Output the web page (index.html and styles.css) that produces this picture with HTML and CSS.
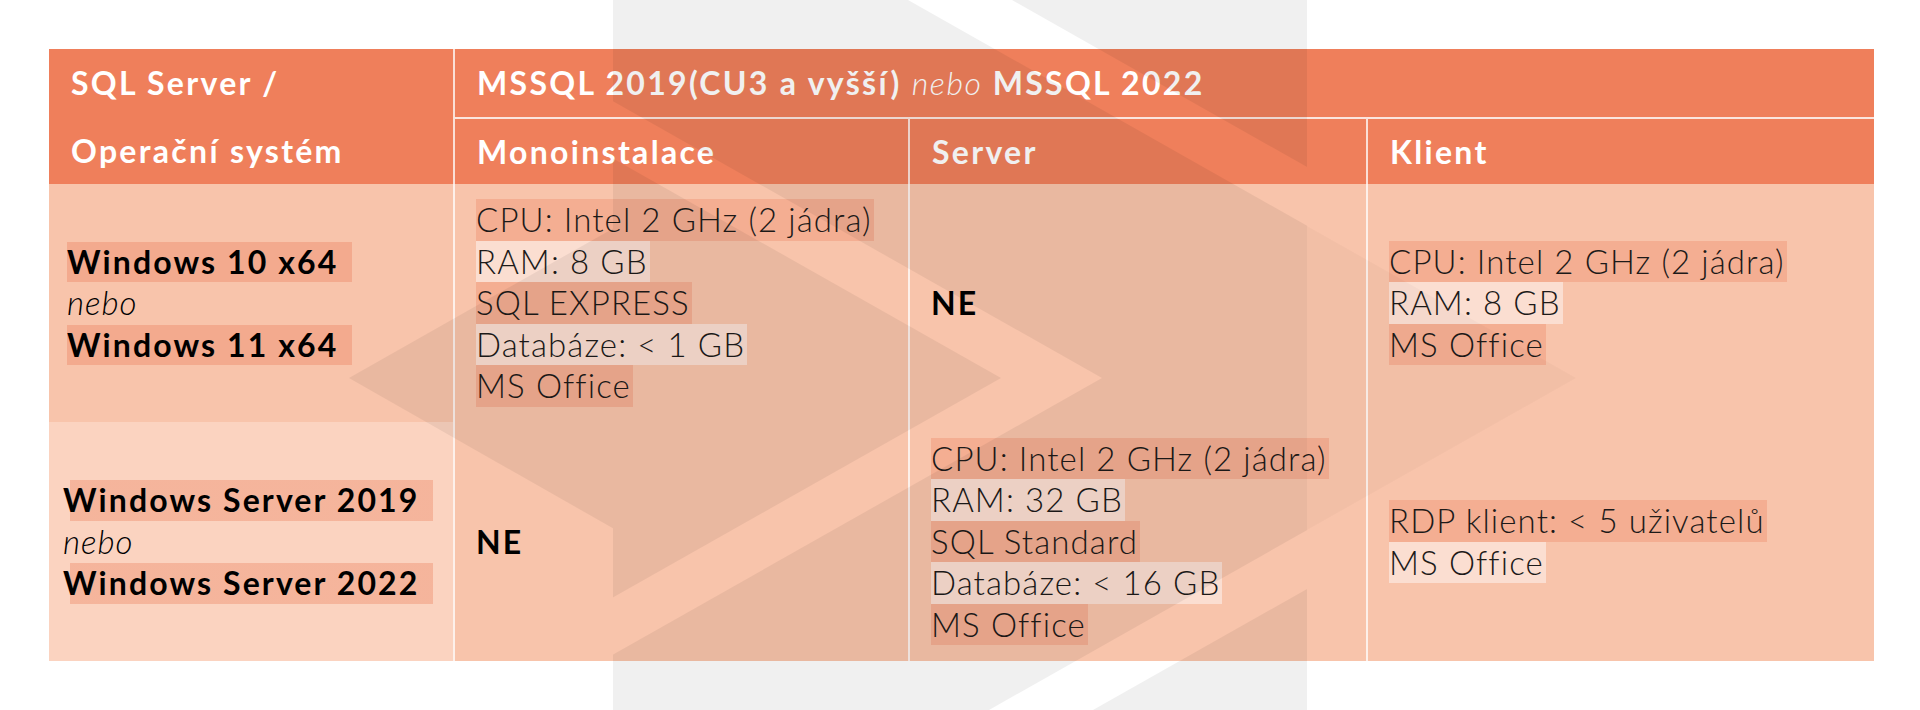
FILE: index.html
```html
<!DOCTYPE html>
<html lang="cs">
<head>
<meta charset="utf-8">
<title>Požadavky</title>
<link rel="stylesheet" href="styles.css">
</head>
<body>
<div class="page">
  <div class="tbl">
    <div class="c h h-os"><span>SQL Server /<br>Operační systém</span></div>
    <div class="c h h-top col"><span>MSSQL 2019(CU3 a vyšší) <i class="hi">nebo</i> MSSQL 2022</span></div>
    <div class="c h h-sub col"><span>Monoinstalace</span></div>
    <div class="c h h-sub col"><span>Server</span></div>
    <div class="c h h-sub col"><span>Klient</span></div>

    <div class="c b os os1">
      <div><span class="hb">Windows 10 x64</span></div>
      <div><i class="neb">nebo</i></div>
      <div><span class="hb">Windows 11 x64</span></div>
    </div>
    <div class="c b col">
      <div><span class="hl d">CPU: Intel 2 GHz (2 jádra)</span></div>
      <div><span class="hl l">RAM: 8 GB</span></div>
      <div><span class="hl d">SQL EXPRESS</span></div>
      <div><span class="hl l">Databáze: &lt; 1 GB</span></div>
      <div><span class="hl d">MS Office</span></div>
    </div>
    <div class="c b col">
      <div class="ne">NE</div>
    </div>
    <div class="c b col">
      <div><span class="hl d">CPU: Intel 2 GHz (2 jádra)</span></div>
      <div><span class="hl l">RAM: 8 GB</span></div>
      <div><span class="hl d">MS Office</span></div>
    </div>

    <div class="c b os os2">
      <div><span class="hb">Windows Server 2019</span></div>
      <div><i class="neb">nebo</i></div>
      <div><span class="hb">Windows Server 2022</span></div>
    </div>
    <div class="c b col">
      <div class="ne">NE</div>
    </div>
    <div class="c b col">
      <div><span class="hl d">CPU: Intel 2 GHz (2 jádra)</span></div>
      <div><span class="hl l">RAM: 32 GB</span></div>
      <div><span class="hl d">SQL Standard</span></div>
      <div><span class="hl l">Databáze: &lt; 16 GB</span></div>
      <div><span class="hl d">MS Office</span></div>
    </div>
    <div class="c b col">
      <div><span class="hl d">RDP klient: &lt; 5 uživatelů</span></div>
      <div><span class="hl l">MS Office</span></div>
    </div>
  </div>

  <svg class="wm" viewBox="0 0 1920 710" width="1920" height="710" aria-hidden="true">
    <defs>
      <mask id="wm-mask" maskUnits="userSpaceOnUse" x="0" y="0" width="1920" height="710">
        <rect x="613" y="0" width="694" height="710" fill="#fff"/>
        <polygon points="349,378 674,194 1001,378 674,563" fill="#fff"/>
        <polygon points="333,0 434,0 1102,378 515,710 414,710 1001,378" fill="#000"/>
        <polygon points="908,0 1012,0 1680,378 1093,710 989,710 1576,378" fill="#000"/>
      </mask>
    </defs>
    <rect x="0" y="0" width="1920" height="710" fill="#000" fill-opacity="0.058" mask="url(#wm-mask)"/>
    <polygon points="1307,226 1576,378 1307,530" fill="#000" fill-opacity="0.022"/>
  </svg>
</div>
</body>
</html>
```

FILE: styles.css
```css
html, body {
  margin: 0;
  padding: 0;
  background: #ffffff;
}

.page {
  position: relative;
  width: 1920px;
  height: 710px;
  overflow: hidden;
  font-family: "Lato", "Liberation Sans", sans-serif;
}

.tbl {
  display: grid;
  grid-template-columns: 404px 455px 458px 508px;
  grid-template-rows: 68px 67px 238px 239px;
  padding: 49px 0 0 49px;
}

.c {
  box-sizing: border-box;
  display: flex;
  flex-direction: column;
  justify-content: center;
  padding-left: 22px;
}

.col {
  border-left: 2px solid rgba(255, 255, 255, 0.75);
}

.h {
  background: #ef7f5b;
  color: #ffffff;
  font-weight: 700;
  font-size: 32px;
  letter-spacing: 2.3px;
  line-height: 38px;
}

.h-os {
  grid-row: span 2;
  line-height: 68px;
}

.h-top {
  grid-column: span 3;
}

.hi {
  font-weight: 300;
  letter-spacing: 1.6px;
}

.h-sub {
  border-top: 2px solid rgba(255, 255, 255, 0.8);
}

.b {
  background: #f8c4ab;
  color: #1d1a19;
  font-size: 33px;
  font-weight: 300;
  letter-spacing: 1.1px;
  line-height: 41.6px;
  padding-left: 21px;
}

.os {
  padding-left: 18px;
}

.os2 {
  background: #fbd3c0;
  padding-left: 14px;
}

.hl {
  display: inline-block;
  line-height: 41.6px;
  padding-right: 2px;
}

.hl.d {
  background: rgba(234, 124, 88, 0.3);
}

.hl.l {
  background: rgba(255, 255, 255, 0.45);
}

.hb {
  display: inline-block;
  line-height: 40.5px;
  font-weight: 700;
  font-size: 32px;
  letter-spacing: 2.1px;
  color: #000;
  padding-right: 14px;
  background: rgba(234, 124, 88, 0.35);
}

.os2 .hb {
  background: linear-gradient(rgba(234, 124, 88, 0.35), rgba(234, 124, 88, 0.35)) no-repeat 7px 0 / calc(100% - 7px) 100%;
}

.neb {
  font-size: 33px;
  font-weight: 300;
  letter-spacing: 1px;
  color: #000;
}

.ne {
  font-size: 32px;
  font-weight: 700;
  letter-spacing: 2px;
  color: #000;
}

.wm {
  position: absolute;
  left: 0;
  top: 0;
  pointer-events: none;
}
```
